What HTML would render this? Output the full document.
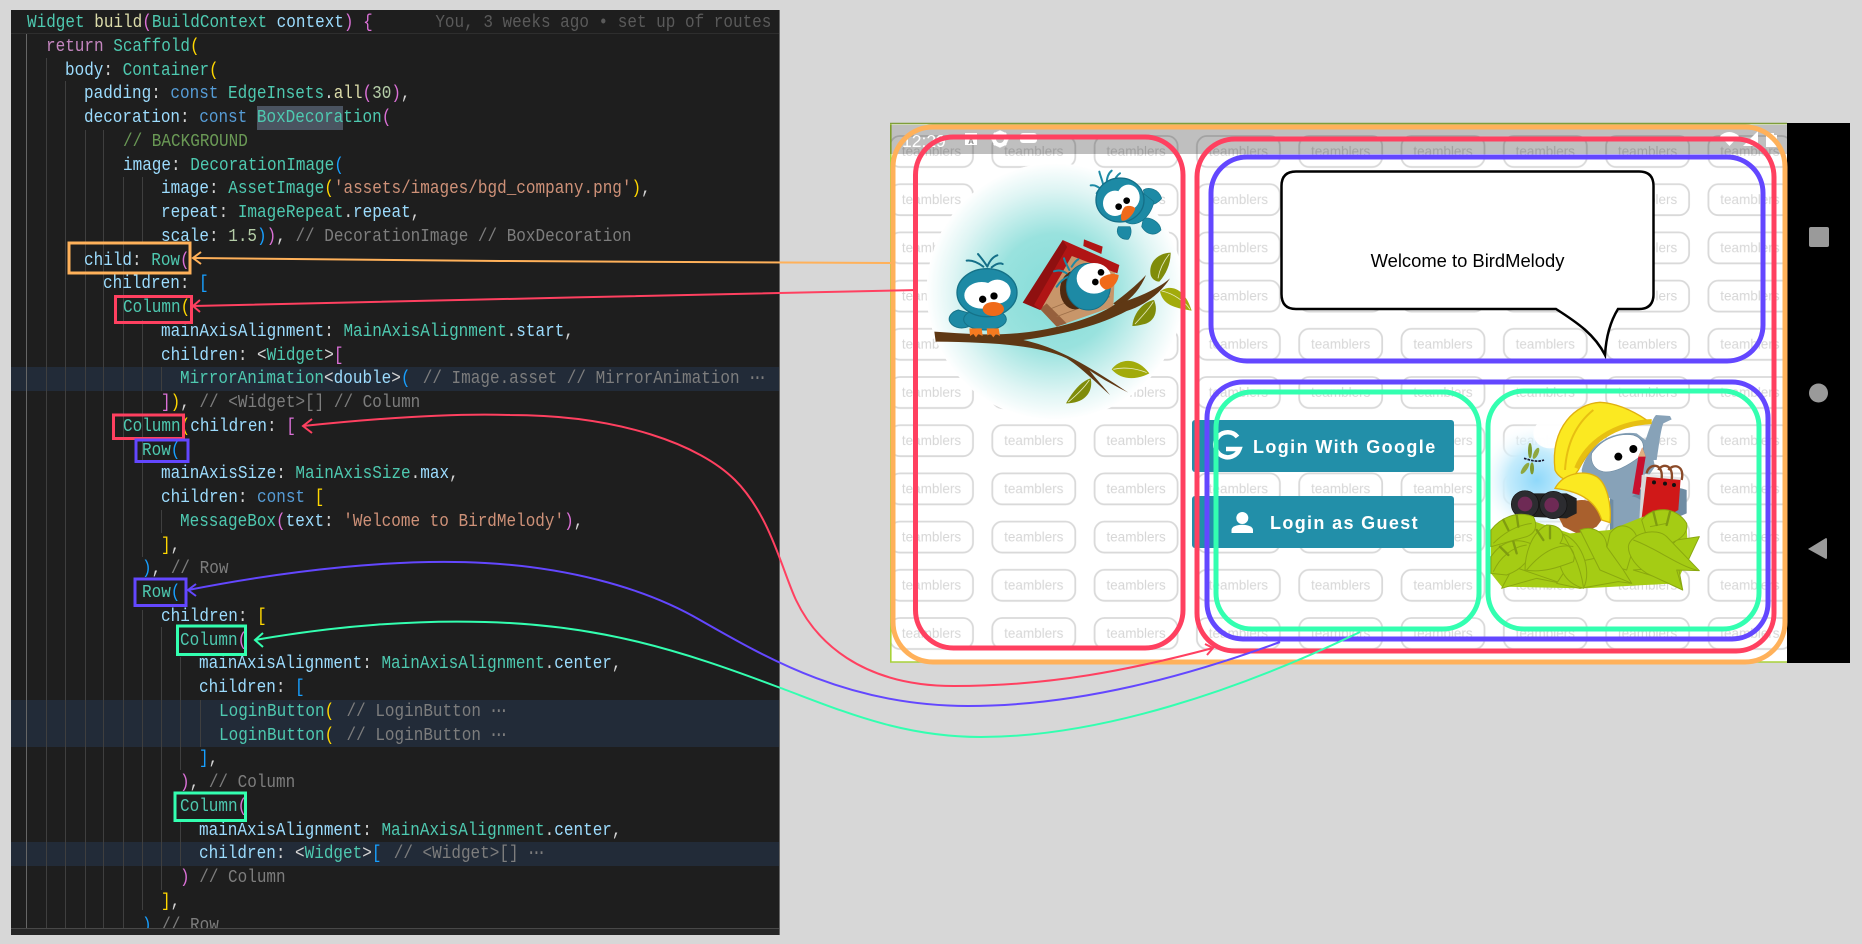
<!DOCTYPE html>
<html lang="en">
<head>
<meta charset="utf-8">
<title>Flutter layout</title>
<style>
html,body{margin:0;padding:0;width:1862px;height:944px;overflow:hidden;background:#d7d7d7}
#code{position:absolute;left:11px;top:10px;width:768px;height:925px;background:#1e1e1e;overflow:hidden;border-right:1px solid #666;box-sizing:content-box}
.hl{position:absolute;left:0;width:768px;background:#222b38}
.l{position:absolute;left:calc(15.5px + 19.2px*var(--n));top:calc(1.2px + 23.75px*var(--i));height:24px;line-height:24px;font:18px/24px "Liberation Mono",monospace;white-space:pre;transform:scaleX(.8889);transform-origin:0 0;color:#d4d4d4}
.c{color:#4ec9b0}.p{color:#9cdcfe}.k{color:#569cd6}.r{color:#c586c0}.s{color:#ce9178}.n{color:#b5cea8}.f{color:#dcdcaa}.cm{color:#6a9955}.g{color:#7d7d7d}.y{color:#ffd700}.m{color:#da70d6}.b{color:#179fff}.d{color:#5a5a5a}
.in{margin-left:3px}.dt{letter-spacing:-5px;margin-left:-2px}
#bar{position:absolute;left:0;top:918px;width:768px;height:7px;background:#262626;border-top:1px solid #484848}
#art{position:absolute;left:0;top:0}
</style>
</head>
<body>
<div id="code">
<div class="hl" style="top:357px;height:24px"></div>
<div class="hl" style="top:690px;height:47px"></div>
<div class="hl" style="top:832px;height:24px"></div>
<div style="position:absolute;left:246px;top:96px;width:86px;height:24px;background:#4a5360"></div>
<div style="position:absolute;left:0;top:23px;width:768px;height:1px;background:#2e2e2e"></div>
<svg width="768" height="925" viewBox="11 10 768 925" style="position:absolute;left:0;top:0" fill="none" stroke="#3f3f3f" stroke-width="1">
<path d="M26.5 34V928" stroke="#666"/>
<path d="M46.5 58V928M65.5 81V928M85.5 130V928M103.5 130V928M123.5 177V928"/>
<path d="M142.5 177V243M142.5 320V557M142.5 610V910"/>
<path d="M161.5 367V391M161.5 510V533M161.5 627V890"/>
<path d="M180.5 657V770M180.5 820V866M200.5 700V747"/>
</svg>
<div class="l" style="--i:0;--n:0"><span class="c">Widget</span> <span class="f">build</span><span class="m">(</span><span class="c">BuildContext</span> <span class="p">context</span><span class="m">)</span> <span class="m">{</span>      <span class="d" style="margin-left:5.600px">You, 3 weeks ago • set up of routes</span></div>
<div class="l" style="--i:1;--n:1"><span class="r">return</span> <span class="c">Scaffold</span><span class="y">(</span></div>
<div class="l" style="--i:2;--n:2"><span class="p">body</span>: <span class="c">Container</span><span class="y">(</span></div>
<div class="l" style="--i:3;--n:3"><span class="p">padding</span>: <span class="k">const</span> <span class="c">EdgeInsets</span>.<span class="f">all</span><span class="m">(</span><span class="n">30</span><span class="m">)</span>,</div>
<div class="l" style="--i:4;--n:3"><span class="p">decoration</span>: <span class="k">const</span> <span class="c">BoxDecoration</span><span class="m">(</span></div>
<div class="l" style="--i:5;--n:5"><span class="cm">// BACKGROUND</span></div>
<div class="l" style="--i:6;--n:5"><span class="p">image</span>: <span class="c">DecorationImage</span><span class="b">(</span></div>
<div class="l" style="--i:7;--n:7"><span class="p">image</span>: <span class="c">AssetImage</span><span class="y">(</span><span class="s">'assets/images/bgd_company.png'</span><span class="y">)</span>,</div>
<div class="l" style="--i:8;--n:7"><span class="p">repeat</span>: <span class="c">ImageRepeat</span>.<span class="p">repeat</span>,</div>
<div class="l" style="--i:9;--n:7"><span class="p">scale</span>: <span class="n">1.5</span><span class="b">)</span><span class="m">)</span>, <span class="g">// DecorationImage // BoxDecoration</span></div>
<div class="l" style="--i:10;--n:3"><span class="p">child</span>: <span class="c">Row</span><span class="m">(</span></div>
<div class="l" style="--i:11;--n:4"><span class="p">children</span>: <span class="b">[</span></div>
<div class="l" style="--i:12;--n:5"><span class="c">Column</span><span class="y">(</span></div>
<div class="l" style="--i:13;--n:7"><span class="p">mainAxisAlignment</span>: <span class="c">MainAxisAlignment</span>.<span class="p">start</span>,</div>
<div class="l" style="--i:14;--n:7"><span class="p">children</span>: &lt;<span class="c">Widget</span>&gt;<span class="m">[</span></div>
<div class="l" style="--i:15;--n:8"><span class="c">MirrorAnimation</span>&lt;<span class="p">double</span>&gt;<span class="b">(</span> <span class="g in">// Image.asset // MirrorAnimation</span> <span class="g dt">···</span></div>
<div class="l" style="--i:16;--n:7"><span class="m">]</span><span class="y">)</span>, <span class="g">// &lt;Widget&gt;[] // Column</span></div>
<div class="l" style="--i:17;--n:5"><span class="c">Column</span><span class="y">(</span><span class="p">children</span>: <span class="m">[</span></div>
<div class="l" style="--i:18;--n:6"><span class="c">Row</span><span class="b">(</span></div>
<div class="l" style="--i:19;--n:7"><span class="p">mainAxisSize</span>: <span class="c">MainAxisSize</span>.<span class="p">max</span>,</div>
<div class="l" style="--i:20;--n:7"><span class="p">children</span>: <span class="k">const</span> <span class="y">[</span></div>
<div class="l" style="--i:21;--n:8"><span class="c">MessageBox</span><span class="m">(</span><span class="p">text</span>: <span class="s">'Welcome to BirdMelody'</span><span class="m">)</span>,</div>
<div class="l" style="--i:22;--n:7"><span class="y">]</span>,</div>
<div class="l" style="--i:23;--n:6"><span class="b">)</span>, <span class="g">// Row</span></div>
<div class="l" style="--i:24;--n:6"><span class="c">Row</span><span class="b">(</span></div>
<div class="l" style="--i:25;--n:7"><span class="p">children</span>: <span class="y">[</span></div>
<div class="l" style="--i:26;--n:8"><span class="c">Column</span><span class="m">(</span></div>
<div class="l" style="--i:27;--n:9"><span class="p">mainAxisAlignment</span>: <span class="c">MainAxisAlignment</span>.<span class="p">center</span>,</div>
<div class="l" style="--i:28;--n:9"><span class="p">children</span>: <span class="b">[</span></div>
<div class="l" style="--i:29;--n:10"><span class="c">LoginButton</span><span class="y">(</span> <span class="g in">// LoginButton</span> <span class="g dt">···</span></div>
<div class="l" style="--i:30;--n:10"><span class="c">LoginButton</span><span class="y">(</span> <span class="g in">// LoginButton</span> <span class="g dt">···</span></div>
<div class="l" style="--i:31;--n:9"><span class="b">]</span>,</div>
<div class="l" style="--i:32;--n:8"><span class="m">)</span>, <span class="g">// Column</span></div>
<div class="l" style="--i:33;--n:8"><span class="c">Column</span><span class="m">(</span></div>
<div class="l" style="--i:34;--n:9"><span class="p">mainAxisAlignment</span>: <span class="c">MainAxisAlignment</span>.<span class="p">center</span>,</div>
<div class="l" style="--i:35;--n:9"><span class="p">children</span>: &lt;<span class="c">Widget</span>&gt;<span class="b">[</span> <span class="g in">// &lt;Widget&gt;[]</span> <span class="g dt">···</span></div>
<div class="l" style="--i:36;--n:8"><span class="m">)</span> <span class="g">// Column</span></div>
<div class="l" style="--i:37;--n:7"><span class="y">]</span>,</div>
<div class="l" style="--i:38;--n:6"><span class="b">)</span> <span class="g">// Row</span></div>
<div id="bar"></div>
</div>

<svg id="art" width="1862" height="944" viewBox="0 0 1862 944" xmlns="http://www.w3.org/2000/svg">
<defs>
<pattern id="tile" patternUnits="userSpaceOnUse" x="889" y="135" width="102.3" height="48.2">
<rect x="1" y="1" width="83" height="31" rx="10" fill="none" stroke="#d9d9d9" stroke-width="1.8"/>
<text x="42.5" y="21" text-anchor="middle" font-family="Liberation Sans, sans-serif" font-size="13.5" fill="#d6d6d6">teamblers</text>
</pattern>
<radialGradient id="sky" gradientUnits="userSpaceOnUse" cx="525" cy="545" r="385">
<stop offset="0" stop-color="#84dcd8"/><stop offset=".45" stop-color="#99e2de"/><stop offset=".8" stop-color="#dff5f4"/><stop offset="1" stop-color="#fff"/>
</radialGradient>
<radialGradient id="blue" gradientUnits="userSpaceOnUse" cx="200" cy="330" r="175">
<stop offset="0" stop-color="#8fd8fa"/><stop offset=".5" stop-color="#c5ecfc"/><stop offset="1" stop-color="#fff" stop-opacity="0"/>
</radialGradient>
</defs>

<!-- phone -->
<rect x="890" y="124" width="897" height="538" fill="#fff"/>
<rect x="890" y="123" width="897" height="540" fill="url(#tile)"/>
<path d="M890.8 124V662H1000" fill="none" stroke="#a8d23a" stroke-width="1.6"/>
<path d="M890 123.6H1787" fill="none" stroke="#7f9e3a" stroke-width="1.6"/>
<path d="M1740 662H1787" fill="none" stroke="#a8d23a" stroke-width="1.6"/>
<rect x="1787" y="123" width="63" height="540" fill="#000"/>
<rect x="1809" y="227" width="20" height="20" rx="2" fill="#9a9a9a"/>
<circle cx="1818.5" cy="393" r="9.5" fill="#9a9a9a"/>
<path d="M1808 549L1826 538Q1827 538 1827 540V557Q1827 559 1826 559Z" fill="#9a9a9a"/>

<!-- bird image -->
<g transform="translate(880 110) scale(.33333)">
<circle cx="525" cy="545" r="385" fill="#fff"/>
<circle cx="525" cy="545" r="385" fill="url(#sky)"/>
<!-- house -->
<path d="M480 597L560 430L705 480L700 590L530 650Z" fill="#c8966a"/>
<path d="M480 597L530 650L560 640L500 580Z" fill="#96603d"/>
<path d="M530 620L690 560M515 595L640 545M555 450L530 500" stroke="#9c6e48" stroke-width="2.5" fill="none"/>
<path d="M612 388L668 410L664 432L610 408Z" fill="#b01515"/>
<path d="M548 390L718 465L712 490L560 432Z" fill="#b01515"/>
<path d="M428 578L548 390L572 428L480 600Z" fill="#8f1010"/>
<path d="M462 585L565 405L580 430L482 600Z" fill="#b01515"/>
<ellipse cx="585" cy="540" rx="45" ry="58" fill="#4e2a10"/>
<!-- branch -->
<path d="M700 580C740 550 775 520 798 495C780 540 750 570 715 592Z" fill="#5f3814"/>
<path d="M163 665C260 672 340 678 430 668C520 658 640 628 705 583C760 568 830 540 870 505C840 552 790 588 740 603C660 645 560 672 430 690C520 710 600 750 745 848C680 815 640 790 628 780C650 810 675 835 690 855C640 810 600 770 560 745C480 707 350 697 167 695Z" fill="#5f3814"/>
<!-- leaves -->
<path d="M872 428C830 430 805 460 812 495C815 505 825 515 838 515C860 490 872 460 872 428Z" fill="#7f8c0a"/>
<path d="M840 545C870 520 915 535 935 602C895 595 850 590 840 545Z" fill="#a2ab0b"/>
<path d="M757 648C760 610 790 575 822 570C835 600 825 630 800 640C785 645 770 648 757 648Z" fill="#7f8c0a"/>
<path d="M695 778C720 745 770 740 808 790C770 810 725 812 695 778Z" fill="#a2ab0b"/>
<path d="M558 880C575 850 600 815 632 805C640 840 620 880 558 880Z" fill="#7f8c0a"/>
<path d="M868 432C850 455 838 480 834 505M845 543C880 550 915 575 930 598M765 642C785 620 805 600 820 575M700 778C730 770 770 775 800 788M565 876C590 855 615 830 628 810" stroke="#e6ecc0" stroke-width="2.5" fill="none"/>
<!-- left bird -->
<path d="M322 470C310 450 300 440 294 432M322 470C330 450 340 440 352 436M310 470C290 455 275 450 260 452M335 472C350 460 360 458 368 462" stroke="#146f88" stroke-width="6" fill="none" stroke-linecap="round"/>
<path d="M235 600C215 605 205 620 208 632C215 650 240 660 265 650L270 610Z" fill="#1d8aa5" stroke="#157288" stroke-width="3"/>
<ellipse cx="315" cy="628" rx="64" ry="32" fill="#1d8aa5" stroke="#157288" stroke-width="3"/>
<path d="M268 655H305L308 678L295 672L288 682L280 672L270 678ZM320 655H356L360 678L348 672L340 682L332 672L322 676Z" fill="#f47a20"/>
<ellipse cx="321" cy="548" rx="90" ry="72" fill="#1d8aa5" stroke="#157288" stroke-width="4"/>
<ellipse cx="305" cy="556" rx="52" ry="40" fill="#fff"/>
<ellipse cx="352" cy="545" rx="40" ry="36" fill="#fff"/>
<circle cx="308" cy="568" r="11" fill="#000"/><circle cx="342" cy="558" r="11" fill="#000"/>
<ellipse cx="340" cy="597" rx="32" ry="21" fill="#f06a1a"/>
<!-- house bird -->
<path d="M560 490C545 480 535 480 522 484M565 500C550 505 540 515 530 530M568 480C560 465 555 455 552 445M575 470C585 455 590 450 595 448" stroke="#1d8aa5" stroke-width="6" fill="none" stroke-linecap="round"/>
<ellipse cx="625" cy="530" rx="66" ry="70" fill="#1d8aa5" stroke="#146f88" stroke-width="3"/>
<ellipse cx="642" cy="505" rx="52" ry="46" fill="#fff"/>
<circle cx="663" cy="487" r="10" fill="#000"/><circle cx="646" cy="516" r="10" fill="#000"/>
<path d="M662 505C680 490 705 490 716 495C715 520 690 542 675 538C660 530 655 515 662 505Z" fill="#f06a1a"/>
<!-- top bird -->
<path d="M670 225C665 205 660 195 658 185M680 222C680 205 685 190 695 182M660 235C645 225 640 225 632 226M650 250C655 240 665 232 675 228M700 220C705 205 712 195 720 190" stroke="#1d8aa5" stroke-width="6" fill="none" stroke-linecap="round"/>
<path d="M790 240C805 230 835 235 845 265C835 280 815 285 800 290Z" fill="#1d8aa5" stroke="#157288" stroke-width="2"/>
<path d="M790 325C810 320 840 335 843 360C825 380 800 375 785 350Z" fill="#1d8aa5" stroke="#157288" stroke-width="2"/>
<path d="M715 350C705 370 720 390 745 388C755 375 755 360 750 350Z" fill="#1d8aa5" stroke="#157288" stroke-width="2"/>
<path d="M730 330C760 360 810 330 822 275L790 250Z" fill="#1d8aa5" stroke="#157288" stroke-width="2"/>
<ellipse cx="720" cy="270" rx="72" ry="66" fill="#1d8aa5" stroke="#146f88" stroke-width="4"/>
<ellipse cx="705" cy="280" rx="36" ry="38" fill="#fff"/>
<ellipse cx="745" cy="262" rx="34" ry="38" fill="#fff"/>
<circle cx="716" cy="290" r="10" fill="#000"/><circle cx="740" cy="272" r="10" fill="#000"/>
<path d="M735 290C745 285 760 288 766 295C760 315 740 335 725 332C720 320 725 300 735 290Z" fill="#f06a1a"/>
</g>

<!-- builder image -->
<g transform="translate(1470 370) scale(.33333)">
<ellipse cx="200" cy="330" rx="175" ry="175" fill="url(#blue)"/>
<ellipse cx="240" cy="190" rx="50" ry="45" fill="#fff" opacity=".95"/>
<!-- elephant -->
<path d="M420 380C470 360 600 340 650 360V430L510 490H420Z" fill="#6f8ca3"/>
<path d="M430 385C470 370 510 380 520 400L510 480L430 480Z" fill="#87a2b8"/>
<path d="M530 200C540 170 548 145 558 135L600 138L605 148L580 160C572 180 568 220 560 270L500 270Z" fill="#87a2b8"/>
<path d="M335 300C350 230 420 180 500 190L540 220L555 290L500 370L450 400L340 345Z" fill="#87a2b8"/>
<path d="M365 250C400 200 450 190 490 195C520 205 530 230 510 260C470 290 430 310 400 305C375 300 360 280 365 250Z" fill="#fff" stroke="#6f8ca3" stroke-width="2"/>
<circle cx="445" cy="260" r="12" fill="#000"/><circle cx="490" cy="237" r="12" fill="#000"/>
<!-- helmet -->
<path d="M255 300C240 170 320 100 390 97C450 100 500 130 530 150H545C470 150 380 190 325 300L300 335C270 325 260 312 255 300Z" fill="#fbe921" stroke="#e0b010" stroke-width="4"/>
<path d="M320 295C350 220 430 160 545 155" fill="none" stroke="#e7bf12" stroke-width="15"/>
<path d="M285 300C290 220 320 160 370 120" fill="none" stroke="#e7bf12" stroke-width="6"/>
<!-- pencil -->
<path d="M517 232L527 260L508 375L487 370L505 260Z" fill="#c8102e"/>
<path d="M517 232L527 260L505 260Z" fill="#e0b080"/>
<!-- notebook -->
<path d="M515 315L530 312L525 480L506 490Z" fill="#d8d8d8"/>
<path d="M530 318L632 325L625 420L510 485Z" fill="#d01818"/>
<path d="M525 312L635 322L632 330L525 320Z" fill="#e8e8e8"/>
<circle cx="552" cy="337" r="6" fill="#111"/><circle cx="585" cy="341" r="6" fill="#111"/><circle cx="612" cy="345" r="6" fill="#111"/>
<path d="M530 310C535 280 580 275 575 325M565 300C575 280 612 280 605 330M595 300C610 280 645 285 635 330" fill="none" stroke="#8b4a28" stroke-width="7"/>
<!-- mole -->
<path d="M265 440C300 370 370 380 410 430L380 470L330 495L280 470Z" fill="#a9602d"/>
<path d="M255 355C280 310 340 298 380 320C410 340 425 400 420 458L395 450C380 400 340 365 255 355Z" fill="#fbe921" stroke="#e0b010" stroke-width="4"/>
<!-- binoculars -->
<path d="M165 370H290L320 385V430L290 445L165 440Z" fill="#222"/>
<circle cx="165" cy="403" r="41" fill="#2c2c30" stroke="#111" stroke-width="2"/>
<circle cx="250" cy="405" r="41" fill="#2c2c30" stroke="#111" stroke-width="2"/>
<circle cx="165" cy="402" r="22" fill="#6e2a55"/>
<circle cx="245" cy="405" r="22" fill="#6e2a55"/>
<!-- dragonfly -->
<ellipse cx="180" cy="242" rx="6" ry="23" fill="#7f9a30"/>
<ellipse cx="198" cy="250" rx="7" ry="18" fill="#8fa840" transform="rotate(25 198 250)"/>
<ellipse cx="165" cy="295" rx="7" ry="20" fill="#8fa840" transform="rotate(35 165 295)"/>
<ellipse cx="186" cy="295" rx="6" ry="18" fill="#7f9a30"/>
<path d="M162 265C180 270 200 278 222 270" stroke="#1a1a30" stroke-width="5" fill="none" stroke-dasharray="8 3"/>
<!-- leaves -->
<path d="M63 520L150 440L300 490L420 480L520 440L650 470L655 560L620 640L340 655L95 650L63 610Z" fill="#a5cc14"/>
<g fill="#a5cc14" stroke="#8aa80f" stroke-width="3" stroke-linejoin="round">
<path d="M95 655L130 590L275 640L200 625Z"/>
<path d="M260 640L330 655L445 635L485 640L400 560L300 580Z"/>
<path d="M490 600L620 640L638 660L625 590Z"/>
<path d="M63 530V480C90 445 140 420 190 440C205 470 195 490 170 500C130 510 100 520 63 530Z"/>
<path d="M63 610V560C90 520 130 500 180 520C190 570 150 600 110 615Z"/>
<path d="M620 510L688 500L655 570L600 530Z"/>
<path d="M515 450C550 405 620 410 650 460C655 490 630 510 600 520L530 500Z"/>
<path d="M420 490C450 450 490 470 500 500L470 600L400 580Z"/>
<path d="M330 480C370 465 410 490 410 530L460 600L485 640L390 600Z"/>
<path d="M340 655C290 640 250 600 270 490C330 500 370 600 340 655Z"/>
<path d="M165 600C165 560 180 490 230 465C270 465 290 490 270 520C300 520 320 550 310 575C270 590 220 610 165 600Z"/>
<path d="M475 530C480 490 560 470 590 500L688 602L620 600L638 660L530 610C500 590 475 560 475 530Z"/>
</g>
<path d="M170 600C220 540 270 520 310 530M490 510C550 530 630 590 680 600M70 520C110 480 150 465 185 460M70 605C90 560 130 530 170 525M540 470L590 460M340 650C330 580 300 530 280 495" fill="none" stroke="#8aa80f" stroke-width="3"/>
<path d="M100 450L115 480M140 435L145 470M200 480L220 510M240 470L240 505M550 425L560 465M600 425L590 465M90 530L115 555M130 515L140 550" stroke="#7f9c10" stroke-width="7" stroke-linecap="round"/>
</g>

<!-- status bar -->
<rect x="890" y="125" width="897" height="29" fill="#000" fill-opacity=".25"/>
<text x="902" y="147" font-family="Liberation Sans, sans-serif" font-size="17.5" fill="#fff">12:29</text>
<rect x="965" y="133" width="12" height="12" fill="#fff"/>
<text x="971" y="144" text-anchor="middle" font-family="Liberation Sans, sans-serif" font-size="8" font-weight="bold" fill="#888">A</text>
<circle cx="1000" cy="139" r="6" fill="none" stroke="#fff" stroke-width="4"/>
<path d="M1000 130.500V133M1000 145V147.500M991.500 139H994M1006 139H1008.500M994 133L996 135M1004 143L1006 145M1006 133L1004 135M996 143L994 145" stroke="#fff" stroke-width="2.500"/>
<rect x="1020" y="133" width="17" height="10" rx="3" fill="#fff"/>
<path d="M1720 136Q1729 128 1739 136L1729.500 146Z" fill="#fff"/>
<path d="M1758 131V146H1743Z" fill="#fff"/>
<path d="M1766 135H1769V133H1774V135H1777V147H1766Z" fill="#fff"/>

<!-- bubble -->
<path d="M1296 171.500H1639Q1653.500 171.500 1653.500 186V294Q1653.500 309 1639 309H1618C1610 322 1606 338 1605 355C1595 335 1578 323 1556 309H1296Q1281.500 309 1281.500 294V186Q1281.500 171.500 1296 171.500Z" fill="#fff" stroke="#000" stroke-width="2.500"/>
<text x="1467.500" y="267" text-anchor="middle" font-family="Liberation Sans, sans-serif" font-size="18.400" fill="#000">Welcome to BirdMelody</text>

<!-- buttons -->
<rect x="1192" y="420" width="262" height="52" rx="3" fill="#228fa9"/>
<rect x="1192" y="496" width="262" height="52" rx="3" fill="#228fa9"/>
<path d="M1237.500 437A12.500 12.500 0 1 0 1239.500 449H1226" fill="none" stroke="#fff" stroke-width="4.500"/>
<text x="1253" y="453" font-family="Liberation Sans, sans-serif" font-size="18" font-weight="bold" letter-spacing="1.400" fill="#fff">Login With Google</text>
<circle cx="1242.300" cy="518" r="6" fill="#fff"/>
<path d="M1231.500 533V530C1231.500 523 1253 523 1253 530V533Z" fill="#fff"/>
<text x="1270" y="529" font-family="Liberation Sans, sans-serif" font-size="18" font-weight="bold" letter-spacing="1.350" fill="#fff">Login as Guest</text>

<!-- layout outlines -->
<g fill="none" stroke-width="5">
<rect x="893" y="127" width="892" height="535" rx="40" stroke="#ffb15a"/>
<rect x="915.500" y="137" width="267.500" height="511" rx="38" stroke="#ff4060"/>
<rect x="1197" y="139" width="577" height="512" rx="38" stroke="#ff4060"/>
<rect x="1211" y="157" width="552" height="204" rx="36" stroke="#6347ff"/>
<rect x="1207" y="382" width="561" height="257" rx="36" stroke="#6347ff"/>
<rect x="1216" y="392" width="263" height="237" rx="36" stroke="#33ffb0"/>
<rect x="1488" y="391" width="271" height="238" rx="36" stroke="#33ffb0"/>
</g>
<!-- code boxes -->
<g fill="none" stroke-width="3">
<rect x="69" y="243" width="121" height="30" stroke="#ffb15a"/>
<rect x="115.500" y="296.500" width="76" height="26" stroke="#ff4060"/>
<rect x="113.500" y="415" width="70" height="23.500" stroke="#ff4060"/>
<rect x="136" y="440" width="52" height="21.500" stroke="#6347ff"/>
<rect x="135" y="579" width="51" height="26.500" stroke="#6347ff"/>
<rect x="177.500" y="626" width="68" height="28.500" stroke="#33ffb0"/>
<rect x="175" y="793" width="70.500" height="27.500" stroke="#33ffb0"/>
</g>
<!-- arrows -->
<g fill="none" stroke-width="2">
<g stroke="#ffb15a"><path d="M193 258L500 261L892 263"/><path d="M201 252L193 258L201 264"/></g>
<g stroke="#ff4060"><path d="M193 306C400 302 700 294 918 290"/><path d="M200 300L193 306L200 312"/>
<path d="M303 426C380 418 450 413 510 415C620 415 700 445 735 480C770 515 782 570 796 600C815 640 860 686 954 686C1050 686 1130 670 1213 648"/><path d="M312 419L303 426L312 433"/><path d="M1205 644L1213 648L1207 655"/></g>
<g stroke="#6347ff"><path d="M188 590C290 570 400 558 485 563C560 567 640 585 700 620C770 660 850 706 968 706C1080 706 1190 675 1280 642"/><path d="M196 584L188 590L196 596"/></g>
<g stroke="#33ffb0"><path d="M255 640C340 625 420 620 485 622C600 625 680 650 778 687C840 710 900 737 981 737C1100 737 1240 690 1360 632"/><path d="M263 633L255 640L263 647"/></g>
</g>
</svg>
</body>
</html>
